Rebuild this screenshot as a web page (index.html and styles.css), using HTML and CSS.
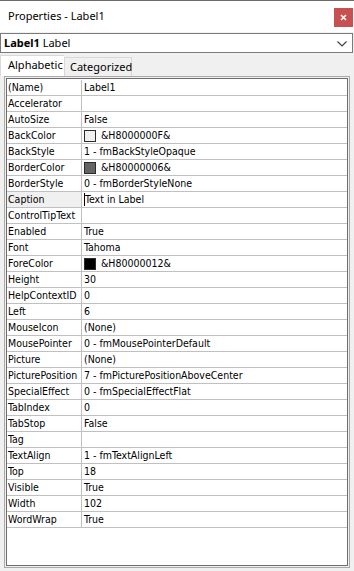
FILE: index.html
```html
<!DOCTYPE html>
<html>
<head>
<meta charset="utf-8">
<link rel="stylesheet" href="styles.css">
</head>
<body>
<div class="win">
  <div class="titlebar">
    <span class="title">Properties - Label1</span>
    <div class="close">
      <svg width="19" height="19" viewBox="0 0 19 19"><path d="M7 7 L12 12 M12 7 L7 12" stroke="#fff" stroke-width="1.6" fill="none"/></svg>
    </div>
  </div>
  <div class="combo">
    <span class="combo-text"><b>Label1</b> Label</span>
    <svg class="chev" width="10" height="6" viewBox="0 0 10 6"><path d="M0.5 0.5 L5 5 L9.5 0.5" stroke="#404040" stroke-width="1.2" fill="none"/></svg>
  </div>
  <div class="tabs">
    <div class="tab active">Alphabetic</div>
    <div class="tab">Categorized</div>
  </div>
  <div class="frame">
    <div class="inner">
      <div class="row"><div class="name">(Name)</div><div class="val">Label1</div></div>
      <div class="row"><div class="name">Accelerator</div><div class="val"></div></div>
      <div class="row"><div class="name">AutoSize</div><div class="val">False</div></div>
      <div class="row"><div class="name">BackColor</div><div class="val"><span class="sw sw-back"></span>&amp;H8000000F&amp;</div></div>
      <div class="row"><div class="name">BackStyle</div><div class="val">1 - fmBackStyleOpaque</div></div>
      <div class="row"><div class="name">BorderColor</div><div class="val"><span class="sw sw-border"></span>&amp;H80000006&amp;</div></div>
      <div class="row"><div class="name">BorderStyle</div><div class="val">0 - fmBorderStyleNone</div></div>
      <div class="row"><div class="name sel">Caption</div><div class="val"><span class="caret"></span>Text in Label</div></div>
      <div class="row"><div class="name">ControlTipText</div><div class="val"></div></div>
      <div class="row"><div class="name">Enabled</div><div class="val">True</div></div>
      <div class="row"><div class="name">Font</div><div class="val">Tahoma</div></div>
      <div class="row"><div class="name">ForeColor</div><div class="val"><span class="sw sw-fore"></span>&amp;H80000012&amp;</div></div>
      <div class="row"><div class="name">Height</div><div class="val">30</div></div>
      <div class="row"><div class="name">HelpContextID</div><div class="val">0</div></div>
      <div class="row"><div class="name">Left</div><div class="val">6</div></div>
      <div class="row"><div class="name">MouseIcon</div><div class="val">(None)</div></div>
      <div class="row"><div class="name">MousePointer</div><div class="val">0 - fmMousePointerDefault</div></div>
      <div class="row"><div class="name">Picture</div><div class="val">(None)</div></div>
      <div class="row"><div class="name">PicturePosition</div><div class="val">7 - fmPicturePositionAboveCenter</div></div>
      <div class="row"><div class="name">SpecialEffect</div><div class="val">0 - fmSpecialEffectFlat</div></div>
      <div class="row"><div class="name">TabIndex</div><div class="val">0</div></div>
      <div class="row"><div class="name">TabStop</div><div class="val">False</div></div>
      <div class="row"><div class="name">Tag</div><div class="val"></div></div>
      <div class="row"><div class="name">TextAlign</div><div class="val">1 - fmTextAlignLeft</div></div>
      <div class="row"><div class="name">Top</div><div class="val">18</div></div>
      <div class="row"><div class="name">Visible</div><div class="val">True</div></div>
      <div class="row"><div class="name">Width</div><div class="val">102</div></div>
      <div class="row"><div class="name">WordWrap</div><div class="val">True</div></div>
    </div>
  </div>
</div>
</body>
</html>
```
FILE: styles.css
```css
* { box-sizing: border-box; }
html, body { margin: 0; padding: 0; }
body {
  width: 354px;
  height: 571px;
  overflow: hidden;
  background: #f0f0f0;
  font-family: "DejaVu Sans Condensed", "DejaVu Sans", sans-serif;
  font-size: 10.5px;
  color: #000;
}
.win {
  display: flex;
  flex-direction: column;
  height: 571px;
}
.titlebar {
  height: 32px;
  background: #fff;
  border-top: 1px solid #6b6b6b;
  display: flex;
  align-items: flex-start;
  justify-content: space-between;
  padding-right: 1px;
}
.title {
  font-family: "Noto Sans", sans-serif;
  font-size: 11px;
  margin-left: 8px;
  margin-top: 6px;
  line-height: 18px;
  color: #000;
}
.close {
  width: 19px;
  height: 19px;
  margin-top: 7px;
  background: #c75050;
}
.close svg { display: block; }
.combo {
  margin-top: 1px;
  width: 353px;
  height: 20px;
  background: #fff;
  border: 1px solid #7a7a7a;
  display: flex;
  align-items: center;
  justify-content: space-between;
  padding: 0 5px 0 3px;
}
.combo-text {
  font-family: "Noto Sans", sans-serif;
  font-size: 11px;
  line-height: 16px;
}
.combo-text b { font-weight: 700; }
.chev { display: block; margin-top: 1px; }
.tabs {
  margin-top: 2px;
  height: 21px;
  display: flex;
  align-items: flex-start;
}
.tab {
  font-family: "Noto Sans", sans-serif;
  font-size: 11px;
  height: 19px;
  margin-top: 2px;
  width: 68px;
  padding: 0 0 0 5px;
  line-height: 18px;
  border: 1px solid #d9d9d9;
  border-bottom: none;
  background: #f0f0f0;
  white-space: nowrap;
}
.tab.active {
  height: 21px;
  margin-top: 0;
  width: 64px;
  padding: 0 0 0 7px;
  line-height: 18px;
  background: #fff;
  border-right: none;
}
.frame {
  margin-left: 4px;
  width: 346px;
  height: 492px;
  border: 1px solid #a9a9a9;
  padding: 1px;
  background: #f0f0f0;
}
.inner {
  height: 100%;
  border: 1px solid #6d6d6d;
  background: #fff;
  padding-top: 1px;
}
.row {
  display: flex;
  height: 16px;
  border-bottom: 1px solid #c0c0c0;
}
.name {
  width: 75px;
  flex: none;
  border-right: 1px solid #c0c0c0;
  padding-left: 1px;
  line-height: 15px;
  white-space: nowrap;
  overflow: hidden;
}
.name.sel { background: #f0f0f0; }
.val {
  flex: 1;
  padding-left: 2px;
  line-height: 15px;
  white-space: nowrap;
  display: flex;
  align-items: center;
}
.sw {
  display: inline-block;
  width: 12px;
  height: 12px;
  border: 1px solid #2b2b2b;
  margin-right: 5px;
  flex: none;
}
.sw-back { background: #f0f0f0; }
.sw-border { background: #646464; }
.sw-fore { background: #000; }
.caret {
  display: inline-block;
  width: 1px;
  height: 13px;
  background: #000;
}
```
